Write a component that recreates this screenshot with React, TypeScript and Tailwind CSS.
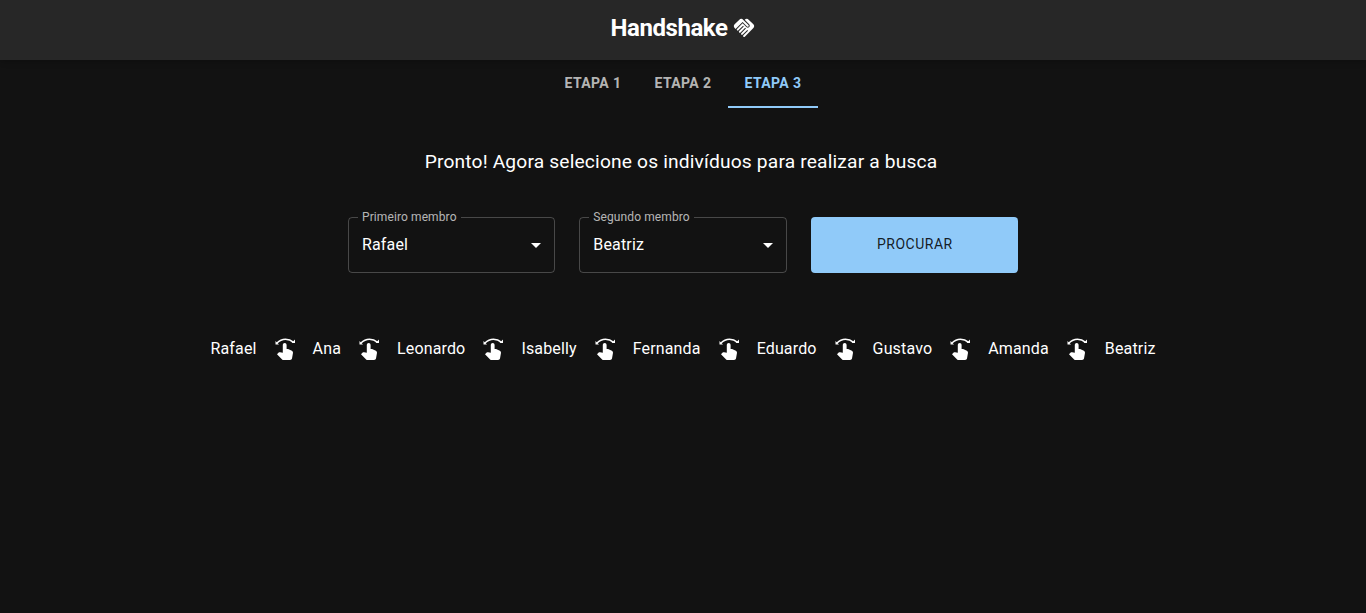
import { MdHandshake, MdArrowDropDown } from 'react-icons/md';

const NAMES = ['Rafael', 'Ana', 'Leonardo', 'Isabelly', 'Fernanda', 'Eduardo', 'Gustavo', 'Amanda', 'Beatriz'];

function SwipeIcon() {
  return (
    <svg width="24" height="24" viewBox="0 0 24 24" fill="currentColor">
      <path d="M4 6C6.5 3.4 9.5 2.2 12.5 2.2s5.5.9 7.8 2.9" fill="none" stroke="currentColor" strokeWidth="1.5" />
      <path d="M2.5 4v3.5H6zM22 2.5V6h-3.5z" />
      <path d="M18.89 13.77l-3.8-1.67c-.13-.06-.28-.1-.44-.1H13.6V8c0-1.1-.8-2-1.9-2s-1.9.9-1.9 2v7.8l-2.67-.55c-.19-.03-1.02-.15-1.73.56L4 17.22l5.12 5.19c.37.38.88.59 1.41.59h6.55c.98 0 1.81-.7 1.97-1.67l.92-5.44c.15-.86-.29-1.72-1.08-2.12z" />
    </svg>
  );
}

function Tab({ label, active }: { label: string; active?: boolean }) {
  return (
    <div
      className={`flex h-12 w-[90px] items-center justify-center text-sm font-bold uppercase tracking-[0.4px] border-b-2 ${
        active ? 'text-[#90caf9] border-[#90caf9]' : 'text-[#ffffffb3] border-transparent'
      }`}
    >
      {label}
    </div>
  );
}

function MemberSelect({ label, value }: { label: string; value: string }) {
  return (
    <div className="relative flex h-14 items-center justify-between rounded border border-[#ffffff3b] pl-[13px] pr-[6px]">
      <span className="absolute -top-[8px] left-[9px] bg-[#121212] px-[4px] text-xs leading-[15px] tracking-[0.1px] text-[#ffffffb3]">
        {label}
      </span>
      <span className="text-base tracking-[0.15px] text-white">{value}</span>
      <MdArrowDropDown size={24} className="text-white" />
    </div>
  );
}

export default function App() {
  return (
    <div className="min-h-[613px] bg-[#121212] font-['Roboto',sans-serif] text-white">
      <header className="flex h-[60px] items-center justify-center bg-[#272727] pb-[5px] pl-[1px] shadow-md">
        <span className="text-2xl font-bold tracking-[-0.45px]">Handshake</span>
        <MdHandshake size={24} className="ml-[5px]" />
      </header>

      <nav className="flex justify-center">
        <Tab label="Etapa 1" />
        <Tab label="Etapa 2" />
        <Tab label="Etapa 3" active />
      </nav>

      <h1 className="mt-10 pr-[4px] text-center text-[19.2px] font-normal leading-[28px] tracking-[0.17px]">
        Pronto! Agora selecione os indivíduos para realizar a busca
      </h1>

      <div className="mx-auto mt-[41px] grid w-[670px] grid-cols-3 gap-6">
        <MemberSelect label="Primeiro membro" value="Rafael" />
        <MemberSelect label="Segundo membro" value="Beatriz" />
        <button className="h-14 rounded bg-[#90caf9] pb-[2px] pl-[1px] text-sm font-normal uppercase tracking-[0.5px] text-[#000000de]">
          Procurar
        </button>
      </div>

      <div className="mt-[64px] flex items-center justify-center gap-4">
        {NAMES.map((name, i) => (
          <div key={name} className="flex items-center gap-4">
            {i > 0 && <SwipeIcon />}
            <span className="text-base font-normal tracking-[0.15px]">{name}</span>
          </div>
        ))}
      </div>
    </div>
  );
}
